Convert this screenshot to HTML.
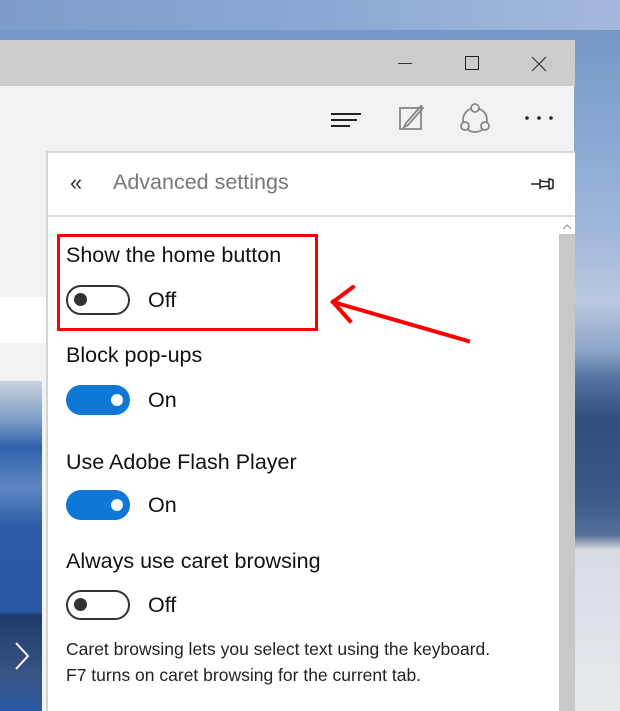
<!DOCTYPE html>
<html><head><meta charset="utf-8"><style>
*{margin:0;padding:0;box-sizing:border-box}
body{width:620px;height:711px;overflow:hidden;position:relative;font-family:"Liberation Sans",sans-serif;
background:linear-gradient(180deg,#7192c4 0px,#86a5d1 120px,#9fb7da 230px,#b9c9e0 300px,#8ea6c9 350px,#5877a6 375px,#2f4d7e 420px,#3c5a88 500px,#56709a 535px,#d7dce3 550px,#e6e9ed 711px)}
.a{position:absolute}
.t{font-size:21.5px;color:#111}
.tog{position:absolute;left:66px;width:64px;height:30px;border-radius:15px}
.off{border:2.5px solid #333;background:#fff}
.off::after{content:"";position:absolute;left:6px;top:6px;width:13px;height:13px;border-radius:50%;background:#333}
.on{background:#0f78d7}
.on::after{content:"";position:absolute;right:7px;top:9px;width:12px;height:12px;border-radius:50%;background:#fff}
</style></head><body>
<div class="a" style="left:0;top:0;width:620px;height:30px;background:linear-gradient(90deg,#7d9ccb,#8aa8d3 50%,#a3b9dc)"></div>
<!-- window -->
<div class="a" style="left:0;top:40px;width:575px;height:671px;background:#f2f2f2;border-right:1px solid #8aa0c0"></div>
<div class="a" style="left:0;top:40px;width:575px;height:46px;background:#cccccc"></div>
<div class="a" style="left:398px;top:63px;width:14px;height:1px;background:#333"></div>
<div class="a" style="left:465px;top:56px;width:14px;height:14px;border:1px solid #222"></div>
<svg class="a" style="left:530px;top:55px" width="18" height="18"><path d="M2 2 L16 16 M16 2 L2 16" stroke="#333" stroke-width="1.2"/></svg>
<svg class="a" style="left:320px;top:95px" width="250" height="50">
<g stroke="#222" stroke-width="2"><line x1="11" y1="19" x2="41" y2="19"/><line x1="11" y1="25" x2="37" y2="25"/><line x1="11" y1="31" x2="30" y2="31"/></g>
<g stroke="#888" stroke-width="1.8" fill="none"><rect x="80" y="13" width="21" height="21"/><path d="M86 28 L84 32 L88 30 L103 13 L101 11 Z"/>
<circle cx="155" cy="25" r="12"/><circle cx="155" cy="13" r="4" fill="#f2f2f2"/><circle cx="145" cy="31" r="4" fill="#f2f2f2"/><circle cx="165" cy="31" r="4" fill="#f2f2f2"/></g>
<g fill="#222"><circle cx="207" cy="23" r="1.8"/><circle cx="219" cy="23" r="1.8"/><circle cx="231" cy="23" r="1.8"/></g>
</svg>
<!-- left page -->
<div class="a" style="left:0;top:297px;width:47px;height:46px;background:#fff"></div>
<div class="a" style="left:0;top:381px;width:42px;height:330px;background:linear-gradient(180deg,#c9d2dc 0%,#7b9cc6 12%,#2f62ad 20%,#5e86c2 32%,#2b5ba5 45%,#2a5aa5 70%,#1f3b6b 71%,#3a5488 90%,#2a5aa5 100%)"></div>
<svg class="a" style="left:10px;top:640px" width="24" height="32"><path d="M6 3 L18 16 L6 29" stroke="#fff" stroke-width="2" fill="none"/></svg>
<!-- panel -->
<div class="a" style="left:46px;top:151px;width:529px;height:560px;background:#fff;border-left:2px solid #d4d4d4;border-top:2px solid #d8d8d8"></div>
<div class="a" style="left:48px;top:215px;width:527px;height:2px;background:#dcdcdc"></div>
<div class="a" style="left:70px;top:170px;font-size:22px;color:#333">«</div>
<div class="a" style="left:113px;top:170px;font-size:21.5px;color:#777">Advanced settings</div>
<svg class="a" style="left:528px;top:174px" width="30" height="20"><path d="M3 10 H12 M12 5 V15 M12 7 L21 8 V12 L12 13 M21 5 V15 L25 14 V6 Z" stroke="#222" stroke-width="1.5" fill="none"/></svg>
<div class="a" style="left:559px;top:234px;width:16px;height:477px;background:#c8c8c8"></div>
<svg class="a" style="left:560px;top:222px" width="14" height="10"><path d="M3 7 L7 3 L11 7" stroke="#999" stroke-width="1.2" fill="none"/></svg>
<!-- items -->
<div class="a t" style="left:66px;top:243px">Show the home button</div>
<div class="tog off" style="top:285px"></div><div class="a t" style="left:148px;top:288px">Off</div>
<div class="a" style="left:57px;top:234px;width:261px;height:97px;border:3px solid #f00"></div>
<svg class="a" style="left:325px;top:285px" width="150" height="65"><path d="M143 56 L8 17 M8 17 L28 2 M8 17 L25 36" stroke="#f00" stroke-width="4" fill="none" stroke-linecap="square"/></svg>
<div class="a t" style="left:66px;top:343px">Block pop-ups</div>
<div class="tog on" style="top:385px"></div><div class="a t" style="left:148px;top:388px">On</div>
<div class="a t" style="left:66px;top:450px">Use Adobe Flash Player</div>
<div class="tog on" style="top:490px"></div><div class="a t" style="left:148px;top:493px">On</div>
<div class="a t" style="left:66px;top:549px">Always use caret browsing</div>
<div class="tog off" style="top:590px"></div><div class="a t" style="left:148px;top:593px">Off</div>
<div class="a" style="left:66px;top:636px;font-size:17.5px;line-height:26px;color:#222">Caret browsing lets you select text using the keyboard.<br>F7 turns on caret browsing for the current tab.</div>
</body></html>
